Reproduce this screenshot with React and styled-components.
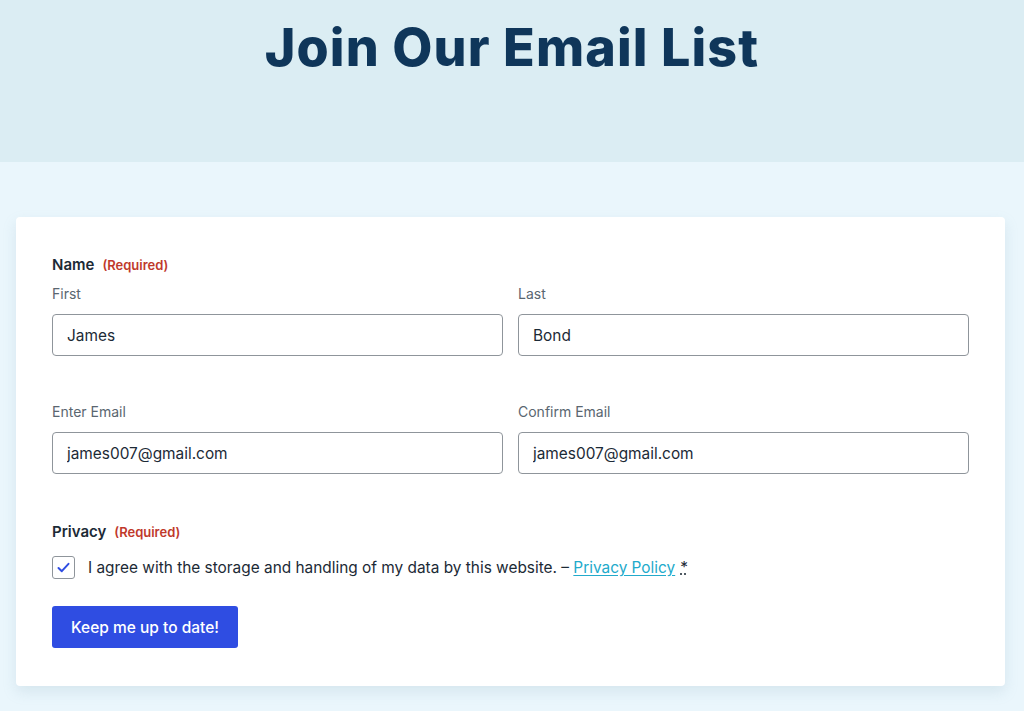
import React from 'react'
import styled, { createGlobalStyle } from 'styled-components'

const GlobalStyle = createGlobalStyle`
  html, body {
    margin: 0;
    padding: 0;
    background: #eaf6fc;
    font-family: Inter, "Noto Sans", "Liberation Sans", sans-serif;
    -webkit-font-smoothing: antialiased;
  }
`

const Page = styled.div`
  min-height: 711px;
  background: #eaf6fc;
`

const Header = styled.header`
  height: 162px;
  background: #dbedf3;
  display: flex;
  justify-content: center;
  box-sizing: border-box;
  padding-top: 16px;
`

const Title = styled.h1`
  margin: 0;
  font-size: 52px;
  line-height: 64px;
  font-weight: 800;
  color: #0f365a;
  letter-spacing: 1.1px;
`

const Main = styled.main`
  padding: 55px 19px 0 16px;
`

const Card = styled.form`
  background: #fff;
  border-radius: 4px;
  box-shadow: 0 6px 14px rgba(120, 160, 180, 0.18);
  padding: 38px 36px 36px 36px;
  height: 469px;
  box-sizing: border-box;
`

const Legend = styled.div`
  display: flex;
  align-items: baseline;
  gap: 8px;
  font-size: 15px;
  font-weight: 600;
  color: #1c2a36;
  line-height: 20px;
`

const Required = styled.span`
  font-size: 13px;
  font-weight: 600;
  color: #c0392b;
`

const Row = styled.div`
  display: grid;
  grid-template-columns: 1fr 1fr;
  gap: 15px;
  margin-top: ${p => p.$top || 0}px;
`

const Field = styled.label`
  display: flex;
  flex-direction: column;
`

const SubLabel = styled.span`
  font-size: 14px;
  line-height: 20px;
  color: #5a6670;
  margin-bottom: 10px;
`

const Input = styled.input`
  height: 42px;
  box-sizing: border-box;
  border: 1px solid #8f959b;
  border-radius: 4px;
  padding: 0 14px;
  font-family: inherit;
  font-size: 15.4px;
  color: #1c2a36;
  background: #fff;
  outline: none;
`

const PrivacyBlock = styled.div`
  margin-top: 48px;
`

const CheckRow = styled.label`
  display: flex;
  align-items: center;
  gap: 13px;
  margin-top: 14px;
  font-size: 15.4px;
  color: #1c2a36;
`

const Box = styled.span`
  width: 21px;
  height: 21px;
  border: 1px solid #8f959b;
  border-radius: 3px;
  display: flex;
  align-items: center;
  justify-content: center;
  flex-shrink: 0;
`

const PolicyLink = styled.a`
  color: #22aacb;
  text-decoration: underline;
  text-underline-offset: 2px;
`

const Star = styled.abbr`
  margin-left: 5px;
  text-decoration: underline dotted;
  color: #1c2a36;
`

const Button = styled.button`
  margin-top: 27px;
  height: 42px;
  padding: 0 19px;
  border: none;
  border-radius: 3px;
  background: #2f4de2;
  color: #fff;
  font-family: inherit;
  font-size: 15.5px;
  font-weight: 500;
  cursor: pointer;
`

export default function App() {
  return (
    <Page>
      <GlobalStyle />
      <Header>
        <Title>Join Our Email List</Title>
      </Header>
      <Main>
        <Card onSubmit={e => e.preventDefault()}>
          <Legend>
            Name <Required>(Required)</Required>
          </Legend>
          <Row $top={9}>
            <Field>
              <SubLabel>First</SubLabel>
              <Input defaultValue="James" />
            </Field>
            <Field>
              <SubLabel>Last</SubLabel>
              <Input defaultValue="Bond" />
            </Field>
          </Row>
          <Row $top={46}>
            <Field>
              <SubLabel>Enter Email</SubLabel>
              <Input defaultValue="james007@gmail.com" />
            </Field>
            <Field>
              <SubLabel>Confirm Email</SubLabel>
              <Input defaultValue="james007@gmail.com" />
            </Field>
          </Row>
          <PrivacyBlock>
            <Legend>
              Privacy <Required>(Required)</Required>
            </Legend>
            <CheckRow>
              <Box>
                <svg width="13" height="11" viewBox="0 0 13 11" fill="none">
                  <path d="M1.5 6 L4.8 9.2 L11.5 1.8" stroke="#2f4de2" strokeWidth="2" strokeLinecap="round" strokeLinejoin="round" />
                </svg>
              </Box>
              <span>
                I agree with the storage and handling of my data by this website. –{' '}
                <PolicyLink href="#">Privacy Policy</PolicyLink>
                <Star title="required">*</Star>
              </span>
            </CheckRow>
          </PrivacyBlock>
          <Button type="submit">Keep me up to date!</Button>
        </Card>
      </Main>
    </Page>
  )
}
